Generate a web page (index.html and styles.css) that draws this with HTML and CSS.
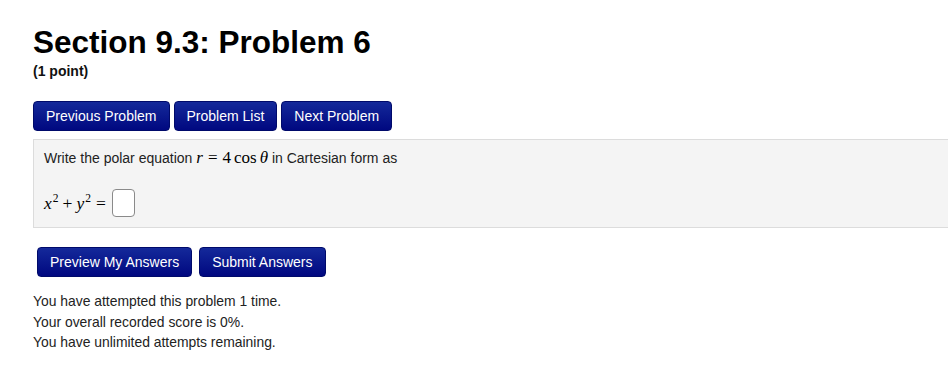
FILE: index.html
```html
<!DOCTYPE html>
<html>
<head>
<meta charset="utf-8">
<link rel="stylesheet" href="styles.css">
</head>
<body>
<div class="page">
  <h1 class="title">Section 9.3: Problem 6</h1>
  <div class="points">(1 point)</div>
  <div class="nav">
    <a class="btn">Previous Problem</a>
    <a class="btn">Problem List</a>
    <a class="btn">Next Problem</a>
  </div>
  <div class="problem">
    <p class="line">Write the polar equation <span class="math"><i>r</i><span class="rel">=</span>4<span class="op">cos</span><i>θ</i></span> in Cartesian form as</p>
    <div class="answer-row">
      <span class="math"><i>x</i><sup>2</sup><span class="bin">+</span><i>y</i><sup>2</sup><span class="rel rel-end">=</span></span>
      <span class="answer-box"></span>
    </div>
  </div>
  <div class="submit">
    <a class="btn">Preview My Answers</a>
    <a class="btn">Submit Answers</a>
  </div>
  <div class="status">
    <div>You have attempted this problem 1 time.</div>
    <div>Your overall recorded score is 0%.</div>
    <div>You have unlimited attempts remaining.</div>
  </div>
</div>
</body>
</html>
```
FILE: styles.css
```css
html, body {
  margin: 0;
  padding: 0;
  background: #fff;
  overflow: hidden;
}
body {
  font-family: "Liberation Sans", Arial, sans-serif;
  color: #222;
}
.page {
  padding: 24px 0 0 33px;
}
.title {
  margin: 0;
  font-size: 31.5px;
  line-height: 36px;
  font-weight: bold;
  color: #000;
}
.points {
  margin-top: 1px;
  font-size: 14px;
  line-height: 20px;
  font-weight: bold;
  color: #111;
}
.nav {
  margin-top: 20px;
  display: flex;
  gap: 4px;
}
.btn {
  display: inline-block;
  box-sizing: border-box;
  height: 30px;
  padding: 4px 12px;
  font-size: 14px;
  line-height: 20px;
  color: #fff;
  background: linear-gradient(#14299a, #000880);
  border: 1px solid #000a6a;
  border-radius: 4px;
  white-space: nowrap;
}
.problem {
  margin-top: 8px;
  background: #f4f4f4;
  border: 1px solid #dcdcdc;
  border-right: none;
  padding: 8px 10px 10px 10px;
}
.line {
  margin: 0;
  font-size: 14px;
  line-height: 20px;
  color: #222;
}
.math {
  font-family: "Liberation Serif", "DejaVu Serif", serif;
  font-size: 17px;
  color: #000;
}
.math i {
  font-style: italic;
}
.math sup {
  font-size: 11.5px;
  line-height: 0;
  vertical-align: 7px;
  margin-left: 1px;
}
.rel {
  margin: 0 5px;
}
.rel-end {
  margin-right: 2px;
}
.bin {
  margin: 0 4px;
}
.op {
  margin: 0 3px 0 3px;
}
.answer-row {
  margin-top: 21px;
  display: flex;
  align-items: center;
  height: 28px;
}
.answer-row .math {
  font-size: 17.5px;
}
.answer-box {
  display: inline-block;
  box-sizing: border-box;
  width: 23px;
  height: 28px;
  background: #fff;
  border: 1px solid #8a8a8a;
  border-radius: 4px;
  margin-left: 4px;
}
.submit {
  margin-top: 19px;
  padding-left: 4px;
  display: flex;
  gap: 7px;
}
.status {
  margin-top: 14px;
  font-size: 13.9px;
  line-height: 20.5px;
  color: #222;
}
```
